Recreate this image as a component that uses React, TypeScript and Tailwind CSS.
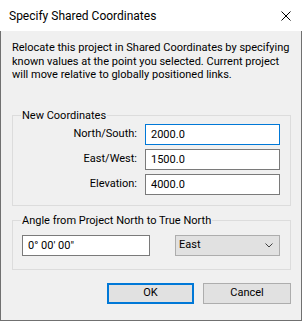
import React, { useState } from "react";

const labelRow = "flex items-center h-[21px]";
const inputClasses =
  "w-[135px] h-[21px] bg-white border border-[#7a7a7a] px-[5px] text-[11px] outline-none";

export default function App() {
  const [coords, setCoords] = useState({
    ns: "2000.0",
    ew: "1500.0",
    elev: "4000.0",
  });
  const [angle, setAngle] = useState("0° 00' 00\"");

  return (
    <div className="w-[302px] h-[321px] flex flex-col bg-[#f0f0f0] text-black text-[11px] font-['Roboto',sans-serif]">
      {/* title bar */}
      <div className="h-[31px] shrink-0 bg-white flex items-center justify-between pl-[9px] pr-[10px]">
        <span className="text-[12px] pt-[1px]">Specify Shared Coordinates</span>
        <svg width="10" height="10" viewBox="0 0 10 10" className="mr-[1px]">
          <path d="M0.5 0.5 L9.5 9.5 M9.5 0.5 L0.5 9.5" stroke="#000" strokeWidth="1" />
        </svg>
      </div>

      <div className="flex-1 flex flex-col border-x border-b border-[#707070] pl-[11px] pr-[10px]">
        <p className="mt-[10px] leading-[13.5px] whitespace-nowrap">
          Relocate this project in Shared Coordinates by specifying
          <br />
          known values at the point you selected. Current project
          <br />
          will move relative to globally positioned links.
        </p>

        <fieldset className="mt-[27px] border border-[#dcdcdc] pl-[9px] pr-[10px] pb-[10px]">
          <legend className="ml-[-1px] px-[1px] leading-[14px]">New Coordinates</legend>
          <div className="mt-[1px] flex flex-col gap-[4px]">
            <div className={labelRow}>
              <span className="w-[115px] text-right mr-[8px]">North/South:</span>
              <input
                className={`${inputClasses} border-[#0078d7]`}
                value={coords.ns}
                onChange={(e) => setCoords({ ...coords, ns: e.target.value })}
              />
            </div>
            <div className={labelRow}>
              <span className="w-[115px] text-right mr-[8px]">East/West:</span>
              <input
                className={inputClasses}
                value={coords.ew}
                onChange={(e) => setCoords({ ...coords, ew: e.target.value })}
              />
            </div>
            <div className={labelRow}>
              <span className="w-[115px] text-right mr-[8px]">Elevation:</span>
              <input
                className={inputClasses}
                value={coords.elev}
                onChange={(e) => setCoords({ ...coords, elev: e.target.value })}
              />
            </div>
          </div>
        </fieldset>

        <fieldset className="mt-[8px] border border-[#dcdcdc] pl-[9px] pr-[10px] pb-[13px]">
          <legend className="ml-[-1px] px-[1px] leading-[14px]">
            Angle from Project North to True North
          </legend>
          <div className="mt-[7px] flex items-center justify-between">
            <input
              className="w-[128px] h-[21px] bg-white border border-[#7a7a7a] px-[5px] text-[11px] outline-none"
              value={angle}
              onChange={(e) => setAngle(e.target.value)}
            />
            <div className="w-[105px] h-[21px] bg-[#e1e1e1] border border-[#adadad] flex items-center justify-between pl-[3px] pr-[6px]">
              <span>East</span>
              <svg width="8" height="5" viewBox="0 0 8 5">
                <path d="M0.5 0.5 L4 4 L7.5 0.5" fill="none" stroke="#404040" strokeWidth="1" />
              </svg>
            </div>
          </div>
        </fieldset>

        <div className="mt-[13px] flex justify-end gap-[9px]">
          <button className="w-[87px] h-[21px] bg-[#e1e1e1] border-2 border-[#0078d7] flex items-center justify-center">
            OK
          </button>
          <button className="w-[88px] h-[21px] bg-[#e1e1e1] border border-[#adadad] flex items-center justify-center">
            Cancel
          </button>
        </div>
      </div>
    </div>
  );
}
